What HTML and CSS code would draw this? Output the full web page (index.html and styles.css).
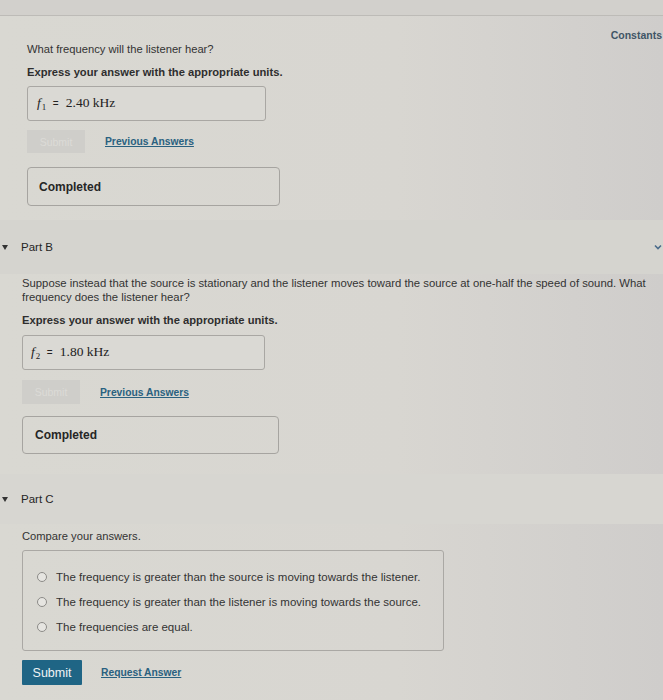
FILE: index.html
```html
<!DOCTYPE html>
<html>
<head>
<meta charset="utf-8">
<link rel="stylesheet" href="styles.css">
</head>
<body>
<div class="topbar"></div>
<div class="page">
  <div class="constants-row"><span class="constants">Constants</span></div>

  <div class="part-body first">
    <div class="question">What frequency will the listener hear?</div>
    <div class="instruction">Express your answer with the appropriate units.</div>
    <div class="answer-box"><span class="math"><i>f</i><sub>1</sub> <span class="eq">=</span> 2.40 kHz</span></div>
    <div class="actions">
      <span class="btn-disabled">Submit</span>
      <a class="link">Previous Answers</a>
    </div>
    <div class="completed">Completed</div>
  </div>

  <div class="part-header">
    <span class="caret"></span>
    <span class="part-title">Part B</span>
    <svg class="chev" width="8" height="8" viewBox="0 0 8 8"><path d="M1 2.5 L4 5.5 L7 2.5" fill="none" stroke="#4a6b8a" stroke-width="1.6"/></svg>
  </div>
  <div class="part-body second">
    <div class="paragraph">Suppose instead that the source is stationary and the listener moves toward the source at one-half the speed of sound. What frequency does the listener hear?</div>
    <div class="instruction b">Express your answer with the appropriate units.</div>
    <div class="answer-box b"><span class="math"><i>f</i><sub>2</sub> <span class="eq">=</span> 1.80 kHz</span></div>
    <div class="actions b">
      <span class="btn-disabled">Submit</span>
      <a class="link">Previous Answers</a>
    </div>
    <div class="completed b">Completed</div>
  </div>

  <div class="part-header c">
    <span class="caret"></span>
    <span class="part-title">Part C</span>
  </div>
  <div class="part-body second">
    <div class="compare">Compare your answers.</div>
    <div class="options">
      <div class="option"><span class="radio"></span><span>The frequency is greater than the source is moving towards the listener.</span></div>
      <div class="option"><span class="radio"></span><span>The frequency is greater than the listener is moving towards the source.</span></div>
      <div class="option"><span class="radio"></span><span>The frequencies are equal.</span></div>
    </div>
    <div class="actions c">
      <span class="btn-submit">Submit</span>
      <a class="link">Request Answer</a>
    </div>
  </div>
</div>
</body>
</html>
```
FILE: styles.css
```css
html, body {
  margin: 0;
  padding: 0;
  overflow: hidden;
}
body {
  background: linear-gradient(90deg, #d9d8d2 0%, #d8d6d1 60%, #cfcdcb 100%);
  font-family: "Liberation Sans", Arial, sans-serif;
  font-size: 11.2px;
  color: #333;
  width: 663px;
  height: 700px;
}
.topbar {
  height: 15px;
  background: #d2d0cc;
  border-bottom: 1px solid #bdbbb7;
}
.page {
  display: flex;
  flex-direction: column;
}
.constants-row {
  display: flex;
  justify-content: flex-end;
  margin-top: 12px;
  height: 14px;
  line-height: 14px;
  overflow: hidden;
}
.constants {
  font-weight: bold;
  color: #3f5566;
  font-size: 10.5px;
  margin-right: 1px;
}
.part-body {
  display: flex;
  flex-direction: column;
  align-items: flex-start;
}
.part-body.first { padding-left: 27px; }
.part-body.second { padding-left: 22px; }
.question {
  line-height: 14px;
}
.instruction {
  font-weight: bold;
  line-height: 14px;
  margin-top: 9px;
  color: #2e2e2e;
  font-size: 11.2px;
}
.answer-box {
  margin-top: 7px;
  width: 228px;
  height: 33px;
  border: 1px solid #a9a7a3;
  border-radius: 3px;
  background: #dad9d4;
  display: flex;
  align-items: center;
  padding-left: 9px;
  box-sizing: content-box;
}
.answer-box.b { margin-top: 8px; width: 233px; padding-left: 8px; }
.math {
  font-family: "Liberation Serif", "Times New Roman", serif;
  font-size: 13.5px;
  color: #222;
}
.math sub { font-size: 9px; margin-left: 1px; }
.eq { font-family: "Liberation Sans", Arial, sans-serif; font-size: 10px; margin: 0 4px 0 3px; }
.actions {
  margin-top: 9px;
  display: flex;
  align-items: center;
  gap: 20px;
  height: 23px;
}
.actions.b { margin-top: 10px; height: 24px; }
.actions.c { margin-top: 9px; height: 25px; gap: 19px; }
.btn-disabled {
  width: 58px;
  height: 100%;
  background: #cfceca;
  color: #dcdbd7;
  display: flex;
  align-items: center;
  justify-content: center;
  font-size: 10.5px;
}
.link {
  color: #2a6180;
  font-weight: bold;
  text-decoration: underline;
  font-size: 10.3px;
}
.completed {
  margin-top: 14px;
  width: 240px;
  height: 37px;
  border: 1px solid #a6a4a0;
  border-radius: 4px;
  padding-left: 11px;
  display: flex;
  align-items: center;
  font-weight: bold;
  font-size: 12px;
  color: #262626;
  box-sizing: content-box;
}
.completed.b { margin-top: 12px; height: 36px; width: 243px; padding-left: 12px; }
.part-header {
  margin-top: 14px;
  height: 54px;
  display: flex;
  align-items: center;
  position: relative;
  background: #d5d4cf;
}
.part-header.c { margin-top: 20px; height: 50px; background: #d7d6d1; }
.caret {
  width: 0;
  height: 0;
  border-left: 3.5px solid transparent;
  border-right: 3.5px solid transparent;
  border-top: 5px solid #333;
  margin-left: 2px;
  margin-right: 13px;
}
.part-title {
  font-size: 11.5px;
  color: #252525;
}
.chev {
  position: absolute;
  right: 1px;
  top: 23px;
}
.paragraph {
  margin-top: 2px;
  line-height: 14px;
  width: 636px;
  font-size: 11.3px;
}
.compare {
  margin-top: 5px;
  line-height: 14px;
}
.options {
  margin-top: 7px;
  width: 420px;
  height: 74px;
  border: 1px solid #aaa8a4;
  border-radius: 3px;
  padding: 14px 0 11px 0;
  display: flex;
  flex-direction: column;
  box-sizing: content-box;
}
.option {
  height: 25px;
  display: flex;
  align-items: center;
  padding-left: 14px;
  gap: 9px;
  font-size: 11.5px;
}
.radio {
  width: 8px;
  height: 8px;
  border: 1px solid #8c8b88;
  border-radius: 50%;
  background: #e6e5e1;
}
.btn-submit {
  width: 60px;
  height: 100%;
  background: #1f6585;
  color: #f0f3f5;
  display: flex;
  align-items: center;
  justify-content: center;
  font-size: 12.5px;
  border-radius: 1px;
}
```
